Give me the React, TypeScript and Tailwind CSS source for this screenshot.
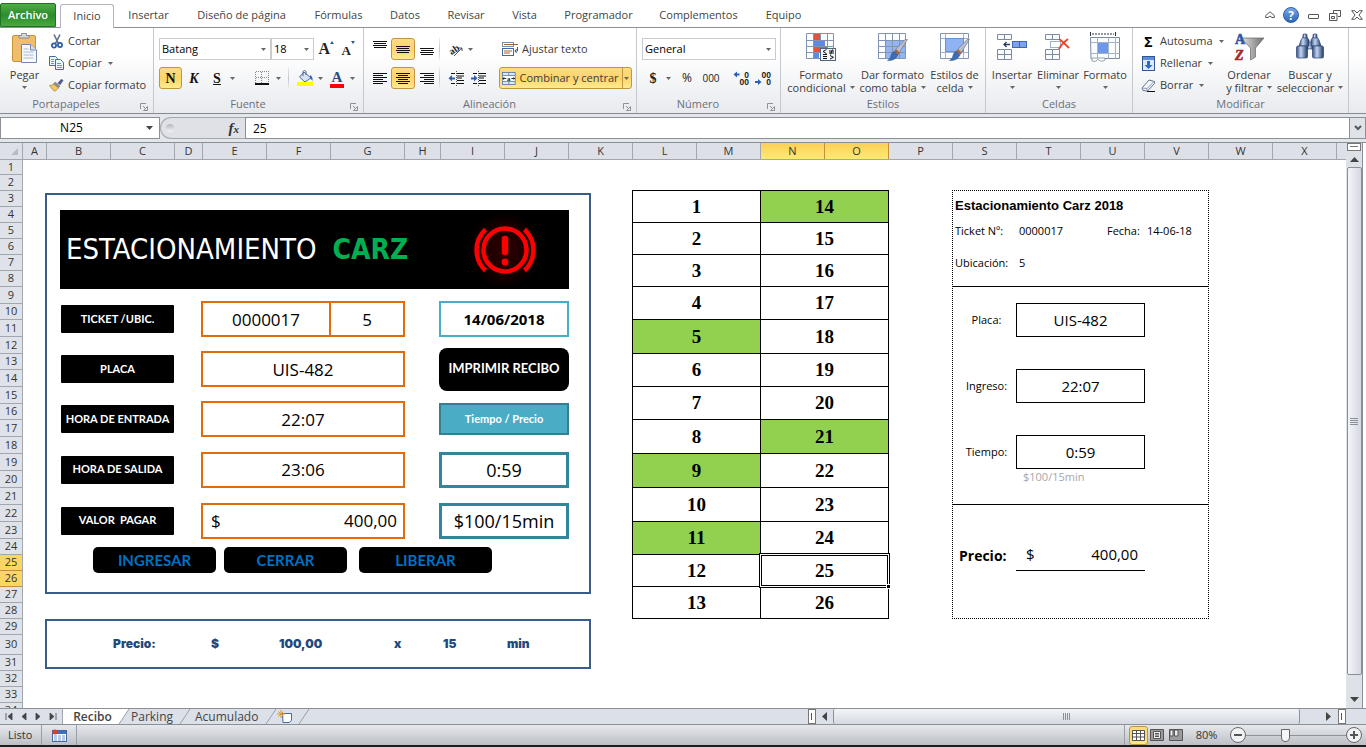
import React from 'react';
import { clsx } from 'clsx';

const TABS = [
  { label: 'Insertar', width: 'w-[67px]' },
  { label: 'Diseño de página', width: 'w-[119px]' },
  { label: 'Fórmulas', width: 'w-[75px]' },
  { label: 'Datos', width: 'w-[58px]' },
  { label: 'Revisar', width: 'w-[64px]' },
  { label: 'Vista', width: 'w-[53px]' },
  { label: 'Programador', width: 'w-[95px]' },
  { label: 'Complementos', width: 'w-[105px]' },
  { label: 'Equipo', width: 'w-[65px]' },
];

const COLUMNS: [string, number][] = [
  ['A', 24], ['B', 64], ['C', 64], ['D', 28], ['E', 64], ['F', 64], ['G', 74], ['H', 36],
  ['I', 64], ['J', 64], ['K', 64], ['L', 64], ['M', 64], ['N', 64], ['O', 64], ['P', 64],
  ['S', 64], ['T', 64], ['U', 64], ['V', 64], ['W', 64], ['X', 64],
];

const ROW_HEIGHTS = [
  15, 16, 16, 16, 16, 16, 16, 16, 17, 16, 17, 17, 16, 17, 17, 16, 17,
  17, 17, 17, 17, 17, 17, 16, 16, 16, 16, 16, 16, 20, 16, 16, 16, 16,
];

const SPOT_HEIGHTS = [32, 32, 32, 33, 34, 33, 33, 34, 34, 34, 33, 32, 32];
const TAKEN = [5, 9, 11, 14, 21];
const SELECTED = 25;

const HOT = 'border border-[#c2963f] rounded-[3px] bg-linear-to-b from-[#fddc83] via-[#fdd566] to-[#feea8f]';

/* ---------- small pieces ---------- */

const Caret: React.FC<{ className?: string }> = ({ className }) => (
  <svg viewBox="0 0 5 3" className={clsx('w-[5px] h-[3px] shrink-0', className)}>
    <path d="M0 0h5L2.5 3z" fill="#666" />
  </svg>
);

const Launcher = () => (
  <button aria-label="Más opciones" className="w-2 h-2">
    <svg viewBox="0 0 8 8" className="w-2 h-2" fill="none" stroke="#8d9299">
      <path d="M.5 6V.5H6M3 3l3 3M7.500 3.500v4h-4z" />
    </svg>
  </button>
);

const Divider = () => <span className="w-px h-[22px] bg-linear-to-b from-[#eceef1] via-[#c3c6cb] to-[#eceef1]" />;

const Lines: React.FC<{ rows: [number, number][]; top?: number }> = ({ rows, top = 1 }) => (
  <svg viewBox="0 0 15 15" className="w-[15px] h-[15px]" shapeRendering="crispEdges">
    {rows.map(([x, w], i) => (
      <rect key={i} x={x} y={top + i * 2} width={w} height="1" fill="#111" />
    ))}
  </svg>
);

interface GroupProps {
  name: string;
  width: string;
  launcher?: boolean;
  children: React.ReactNode;
}

const Group: React.FC<GroupProps> = ({ name, width, launcher, children }) => (
  <section className={clsx('flex flex-col h-full shrink-0 border-r border-[#c5c8cd]', width)}>
    <div className="flex h-[68px]">{children}</div>
    <div className="flex h-[17px] items-center text-[#6b6f7a]">
      <span className={clsx('flex-1 text-center', launcher && 'pr-2')}>{name}</span>
      {launcher && <span className="flex w-[13px] pt-1"><Launcher /></span>}
    </div>
  </section>
);

const BigButton: React.FC<{ lines: string[]; width: string; icon: React.ReactNode }> = ({ lines, width, icon }) => (
  <button className={clsx('flex flex-col items-center pt-1 leading-[13px] whitespace-nowrap', width)}>
    <span className="h-[36px]">{icon}</span>
    <span>{lines[0]}</span>
    <span className="flex h-[13px] items-center gap-1">
      {lines[1]}
      <Caret />
    </span>
  </button>
);

const SmallButton: React.FC<{ label: string; icon: React.ReactNode; caret?: boolean }> = ({ label, icon, caret }) => (
  <button className="flex h-[22px] items-center gap-1 whitespace-nowrap">
    <span className="flex w-[15px] shrink-0 justify-center">{icon}</span>
    {label}
    {caret && <Caret className="ml-[2px]" />}
  </button>
);

const Combo: React.FC<{ value: string; label: string; width: string }> = ({ value, label, width }) => (
  <div className={clsx('relative h-[22px] border border-[#c8cbd0] bg-white', width)}>
    <select aria-label={label} className="h-full w-full appearance-none bg-transparent pl-[2px] text-black outline-none">
      <option>{value}</option>
    </select>
    <Caret className="pointer-events-none absolute right-[4px] top-[9px]" />
  </div>
);

/* ---------- icons ---------- */

const PasteIcon = () => (
  <svg viewBox="0 0 30 32" className="w-[30px] h-8">
    <rect x="2.500" y="3.500" width="23" height="26" rx="1.500" fill="#eebe6a" stroke="#c9913a" />
    <path d="M9 6V3.500h2.500V1.500h5v2H19V6z" fill="#d5d9df" stroke="#777d88" strokeWidth=".8" />
    <path d="M11.500 12.500h9l6 5.500v12.500h-15z" fill="#f6f9fe" stroke="#7288ab" />
    <path d="M20.500 12.500V18h6" fill="#d4e0f2" stroke="#7288ab" />
    <path d="M13.500 17h5M13.500 20h10M13.500 23h10M13.500 26h10" stroke="#a9b9d2" />
  </svg>
);

const CutIcon = () => (
  <svg viewBox="0 0 14 15" className="w-3.5 h-[15px]" fill="none">
    <path d="M4 .5l4.500 9M10 .5l-4.500 9" stroke="#5c6f8d" strokeWidth="1.600" />
    <circle cx="4" cy="11.500" r="2.100" stroke="#2e5aa8" strokeWidth="1.700" />
    <circle cx="10" cy="11" r="2.100" stroke="#2e5aa8" strokeWidth="1.700" />
  </svg>
);

const CopyIcon = () => (
  <svg viewBox="0 0 15 14" className="w-[15px] h-3.5" stroke="#44699f">
    <path d="M.5.500h6l2 2v7h-8z" fill="#eef4fd" />
    <path d="M6.500 3.500h5l3 3v7h-8z" fill="#eef4fd" />
    <path d="M2 3.500h3M2 5.500h3M2 7.500h3M8 7.500h4M8 9.500h5M8 11.500h5" stroke="#6f94cc" />
  </svg>
);

const BrushIcon = () => (
  <svg viewBox="0 0 16 14" className="w-4 h-3.5">
    <path d="M9 5l4-4.500 2.500 1.500L12 7z" fill="#555b8e" />
    <path d="M6.500 4l5 4-1.500 2-5-4z" fill="#8d93a3" stroke="#555" strokeWidth=".6" />
    <path d="M5 6l5 4c-1 2-3 3.500-4.500 3.500C3 11 1.500 9 .5 7.500 2.500 7.500 4 7 5 6z" fill="#efc766" stroke="#a47b27" strokeWidth=".7" />
  </svg>
);

const TableBase: React.FC<{ fill?: string }> = ({ fill }) => (
  <>
    <rect x="1.500" y="1.500" width="27" height="25" fill="#fbfdff" />
    {fill && <rect x="8" y="8" width="20" height="18" fill={fill} />}
    <path d="M1.500 1.500h27v25h-27zM1.500 8.500h27M1.500 14.500h27M1.500 20.500h27M8.500 1.500v25M15.500 1.500v25M22.500 1.500v25" fill="none" stroke="#8294b2" />
  </>
);

const PaintBrush = () => (
  <>
    <path d="M30.500 7.500l-2.500 0L18.500 17.500l3.500 3.500z" fill="#b9bec8" stroke="#6b6f78" strokeWidth=".6" />
    <path d="M19 17l4 4-2 2-4-3.500z" fill="#a6683c" />
    <path d="M17 19.500l4 3.500c-2 4-6 6-10.500 5.500 2-1.500 3-2.500 3.500-5 .5-2 1.500-3.500 3-4z" fill="#3c6cb8" stroke="#27508f" strokeWidth=".5" />
  </>
);

const ConditionalIcon = () => (
  <svg viewBox="0 0 32 31" className="w-8 h-[31px]">
    <TableBase />
    <rect x="9" y="2" width="6" height="6" fill="#e8503a" />
    <rect x="9" y="9" width="11" height="5" fill="#5d8be0" />
    <rect x="9" y="15" width="13" height="5" fill="#e8503a" />
    <rect x="9" y="21" width="5" height="5" fill="#5d8be0" />
    <rect x="15.500" y="16.500" width="15" height="12" fill="#f3f6fb" stroke="#55647d" />
    <path d="M21.500 17.500l-3.500 2 3.500 2M18 22.500h4M24 19h5M24 21h5M27.500 17.500l-2 5M18 24.500h4M18 26.500h4M25 23.500l3.500 1.800-3.500 1.800" fill="none" stroke="#111" />
  </svg>
);

const TableFormatIcon = () => (
  <svg viewBox="0 0 32 31" className="w-8 h-[31px]">
    <TableBase fill="#93b6f3" />
    <PaintBrush />
  </svg>
);

const CellStyleIcon = () => (
  <svg viewBox="0 0 32 31" className="w-8 h-[31px]">
    <path d="M1.500 1.500h28v25h-28z" fill="#fbfdff" stroke="#8294b2" />
    <path d="M6.500 1.500v25M24.500 1.500v25M1.500 6.500h28M1.500 20.500h28" stroke="#a3b2ca" />
    <rect x="6.500" y="6.500" width="18" height="13" fill="#8fb3f5" stroke="#6a90d5" />
    <PaintBrush />
  </svg>
);

const MiniCells: React.FC<{ y: number; h: number }> = ({ y, h }) => (
  <path d={`M1.500 ${y}h14v${h}h-14zM8.500 ${y}v${h}${h > 6 ? `M1.500 ${y + 5}h14` : ''}`} fill="#f9fbfe" stroke="#7d8aa0" />
);

const InsertIcon = () => (
  <svg viewBox="0 0 32 30" className="w-8 h-[30px]">
    <MiniCells y={2.5} h={5} />
    <MiniCells y={17.5} h={10} />
    <rect x="16.500" y="9.500" width="14" height="6" fill="#7ca3ec" stroke="#3f67b2" />
    <path d="M23.500 9.500v6" stroke="#3f67b2" />
    <path d="M14 12.500H8M10.500 10L8 12.500l2.500 2.500" fill="none" stroke="#2a3f66" strokeWidth="1.300" />
  </svg>
);

const DeleteIcon = () => (
  <svg viewBox="0 0 32 30" className="w-8 h-[30px]">
    <g transform="translate(2)">
      <MiniCells y={2.5} h={5} />
      <MiniCells y={17.5} h={10} />
      <path d="M6.500 9.500h10v6h-10z" fill="none" stroke="#3f5fa5" strokeDasharray="1 1" />
      <path d="M15 7c3 2 6 5 10 9M24 7c-4 3-7 6-9 10" fill="none" stroke="#ef4423" strokeWidth="1.800" />
    </g>
  </svg>
);

const FormatIcon = () => (
  <svg viewBox="0 0 32 31" className="w-8 h-[31px]">
    <path d="M1.500 0v4M26.500 0v4" stroke="#333" />
    <path d="M3 2h22" stroke="#26344d" strokeDasharray="2 1" />
    <path d="M1.500 5.500h29v21H9c0 2-6 2-7 0z" fill="#fafcff" stroke="#7d8aa0" />
    <path d="M8.500 5.500v21M19.500 5.500v21M26.500 5.500v21M1.500 10.500h29M1.500 21.500h29" stroke="#a5b2c8" />
    <rect x="9" y="11" width="10" height="10" fill="#6d97e8" />
    <path d="M3 29c3 1 5 0 6-2 1 2 4 3 7 1v-2H3z" fill="#fff" stroke="#7d8aa0" strokeWidth=".8" />
  </svg>
);

const SortIcon = () => (
  <svg viewBox="0 0 32 32" className="w-8 h-8 overflow-visible">
    <defs>
      <linearGradient id="funnel">
        <stop offset="0" stopColor="#e4e4e4" />
        <stop offset="1" stopColor="#6d6d6d" />
      </linearGradient>
    </defs>
    <path d="M8 6h23l-8.500 10v9l-5 3V16z" fill="url(#funnel)" stroke="#757575" strokeWidth=".8" />
    <text x="2" y="12" fontFamily="Liberation Serif, serif" fontWeight="bold" fontSize="14" fill="#2f58a6" stroke="#2f58a6" strokeWidth=".6">A</text>
    <text x="2" y="28" fontFamily="Liberation Serif, serif" fontWeight="bold" fontStyle="italic" fontSize="14" fill="#a3272a" stroke="#a3272a" strokeWidth=".6">Z</text>
  </svg>
);

const BinocularsIcon = () => (
  <svg viewBox="0 0 30 28" className="w-[30px] h-7">
    <defs>
      <linearGradient id="lens">
        <stop offset="0" stopColor="#31507f" />
        <stop offset=".4" stopColor="#c4d6f2" />
        <stop offset="1" stopColor="#1f3966" />
      </linearGradient>
    </defs>
    <g fill="url(#lens)" stroke="#2b4472" strokeWidth=".7">
      <rect x="12" y="10" width="6" height="7" />
      <path d="M4 14l2-6 2-3h4l2 3v6z" />
      <path d="M16 14V8l2-3h4l2 3 2 6z" />
      <rect x="8" y="2" width="4" height="4" rx="1" />
      <rect x="18" y="2" width="4" height="4" rx="1" />
      <rect x="1.500" y="14" width="11" height="12" rx="1.500" />
      <rect x="17.500" y="14" width="11" height="12" rx="1.500" />
    </g>
  </svg>
);

const FillIcon = () => (
  <svg viewBox="0 0 13 15" className="w-[13px] h-[15px]">
    <rect x=".5" y=".5" width="12" height="14" fill="#dfeafb" stroke="#33558f" />
    <rect x="1" y="1" width="11" height="3" fill="#5d8be0" />
    <path d="M5 5h3v4h2.500l-4 4-4-4H5z" fill="#2f66cf" />
  </svg>
);

const EraserIcon = () => (
  <svg viewBox="0 0 15 13" className="w-[15px] h-[13px]">
    <path d="M1 9l7-8 5.500 1.500v2L6.500 12 2 11.500z" fill="#f3f6fb" stroke="#66728a" />
    <path d="M1 9l5 .5 7-7M6 9.500V12" fill="none" stroke="#8b98b0" />
    <path d="M6 12.500h8" stroke="#111" />
  </svg>
);

const BucketIcon = () => (
  <svg viewBox="0 0 17 16" className="w-[17px] h-4">
    <path d="M7 2l7 6-6 4-5.500-5z" fill="#d6e3f6" stroke="#51688f" />
    <path d="M6 6V2c0-2 3-2 3 0v3" fill="none" stroke="#51688f" />
    <path d="M13 5c2 1 3 3 2.500 6-1-1-1.500-2-2.500-3z" fill="#2c66c4" />
    <rect x="0" y="12" width="16" height="4" fill="#ff0" />
  </svg>
);

const WrapIcon = () => (
  <svg viewBox="0 0 17 15" className="w-[17px] h-[15px]" fill="none">
    <rect x=".5" y=".5" width="11" height="4" fill="#fff" stroke="#7d8aa0" />
    <path d="M2 2.500h14" stroke="#a5622d" />
    <rect x=".5" y="6.500" width="11" height="7" fill="#fff" stroke="#44699f" />
    <path d="M2 9h8M2 11h6" stroke="#a5622d" />
    <path d="M15.500 5v4h-2M14.500 7L13 9l1.500 2" stroke="#2f5a9f" />
  </svg>
);

const MergeIcon = () => (
  <svg viewBox="0 0 17 15" className="w-[17px] h-[15px]">
    <rect x=".5" y=".5" width="15" height="14" fill="#dce8fa" stroke="#5a79ad" />
    <path d="M.5 4h15M.5 11h15M8 .5V4M8 11v3.500" stroke="#5a79ad" />
    <rect x="1" y="4.500" width="14" height="6" fill="#fff" />
    <path d="M1 7.500h4M2.500 6L1 7.500 2.500 9M15 7.500h-4M13.500 6L15 7.500 13.500 9" fill="none" stroke="#111" />
    <text x="6" y="10" fontFamily="Liberation Serif, serif" fontSize="8" fontWeight="bold" fill="#111">a</text>
  </svg>
);

const IndentIcon: React.FC<{ right?: boolean }> = ({ right }) => (
  <svg viewBox="0 0 17 15" className="w-[17px] h-[15px]">
    <path d="M3 2.500h4M9 2.500h7M9 5h7M9 7h5M9 9.500h7M3 12.500h4M9 12.500h7" stroke="#111" strokeWidth="1.200" />
    <path d={right ? 'M1 6.500h3V4l3.500 3.200L4 10.500v-2H1z' : 'M7 6.500H4V4L.5 7.200 4 10.500v-2h3z'} fill="#2f5fb5" />
    <path d="M8.500 0v15" stroke="#555" strokeDasharray="1 1" />
  </svg>
);

const DecimalIcon: React.FC<{ top: string; bottom: string; right?: boolean }> = ({ top, bottom, right }) => (
  <svg viewBox="0 0 17 15" className="w-[17px] h-[15px]">
    <text x="16" y="6.500" textAnchor="end" fontFamily="Liberation Sans, sans-serif" fontSize="8.500" fontWeight="bold" fill="#222">{top}</text>
    <text x="16" y="14" textAnchor="end" fontFamily="Liberation Sans, sans-serif" fontSize="8.500" fontWeight="bold" fill="#222">{bottom}</text>
    <path d={right ? 'M0 10h3V8l3.500 3L3 14v-2H0z' : 'M6.500 2.500H4V.5L.5 3.500l3.500 3v-2h2.500z'} fill="#2f5fb5" />
  </svg>
);

const BrakeIcon = () => (
  <svg viewBox="0 0 80 78" className="w-20 h-[78px]" fill="none" stroke="#f00">
    <defs>
      <radialGradient id="glow">
        <stop offset="0" stopColor="#2c0000" />
        <stop offset=".55" stopColor="#1e0000" />
        <stop offset="1" stopColor="#000" />
      </radialGradient>
    </defs>
    <circle cx="40" cy="39" r="38" fill="url(#glow)" stroke="none" />
    <circle cx="40" cy="39" r="21.500" strokeWidth="4.500" />
    <path d="M40 28v13" strokeWidth="6.500" strokeLinecap="round" />
    <circle cx="40" cy="51" r="3.400" fill="#f00" stroke="none" />
    <path d="M20.500 18.500a28 28 0 0 0 0 41M59.500 18.500a28 28 0 0 1 0 41" strokeWidth="4.500" />
  </svg>
);

/* ---------- ribbon ---------- */

const TabBar = () => (
  <nav className="flex h-7 items-end border-b border-[#8b9097] text-[#444]">
    <button className="h-6 w-14 rounded-t-[2px] border border-[#1e7320] bg-linear-to-b from-[#4fae45] via-[#2c8b2c] to-[#48a93c] font-semibold text-white">
      Archivo
    </button>
    <button className="-mb-px ml-1 h-6 w-[54px] rounded-t-[3px] border border-b-0 border-[#b0b4ba] bg-white">Inicio</button>
    <div className="ml-px flex">
      {TABS.map(tab => (
        <button key={tab.label} className={clsx('h-6 pt-px text-center whitespace-nowrap', tab.width)}>{tab.label}</button>
      ))}
    </div>
    <div className="ml-auto flex h-6 items-center gap-2 pr-[3px]">
      <button aria-label="Minimizar la cinta">
        <svg viewBox="0 0 10 8" className="w-[10px] h-2" fill="none" stroke="#555">
          <path d="M.7 4.500L5 .8l4.300 3.700v2H7L5 5 3 6.500H.7z" />
        </svg>
      </button>
      <button aria-label="Ayuda" className="h-4 w-4 rounded-full border border-[#2a5ea8] bg-linear-to-b from-[#7aa7e4] to-[#2d66b9] text-[12px] leading-[13px] font-bold text-white">?</button>
      <button aria-label="Minimizar" className="mx-px mt-[3px] h-[5px] w-[11px] rounded-[1px] border border-[#555]" />
      <button aria-label="Restaurar" className="ml-px">
        <svg viewBox="0 0 12 11" className="w-3 h-[11px]" fill="none" stroke="#555">
          <path d="M4.500 3V.5h7v6H9M.5 3.500H8v7H.5zM2.500 6.500h3v2h-3z" />
        </svg>
      </button>
      <button aria-label="Cerrar" className="ml-[2px]">
        <svg viewBox="0 0 12 10" className="w-3 h-[10px]" fill="none" stroke="#555">
          <path d="M.7.700h3L6 3l2.300-2.300h3L8 5l3.300 4.300h-3L6 7 3.700 9.300h-3L4 5z" />
        </svg>
      </button>
    </div>
  </nav>
);

const Ribbon = () => (
  <div className="flex h-[86px] border-b border-[#868b91] bg-linear-to-b from-white from-30% to-[#e8eaee] text-[#3b3b3b]">
    <Group name="Portapapeles" width="w-[154px]" launcher>
      <BigButton lines={['Pegar', '']} width="w-[49px]" icon={<PasteIcon />} />
      <div className="flex flex-col pt-[2px]">
        <SmallButton label="Cortar" icon={<CutIcon />} />
        <SmallButton label="Copiar" icon={<CopyIcon />} caret />
        <SmallButton label="Copiar formato" icon={<BrushIcon />} />
      </div>
    </Group>

    <Group name="Fuente" width="w-[210px]" launcher>
      <div className="flex flex-col gap-[7px] pt-[10px] pl-[5px]">
        <div className="flex h-[22px] items-center">
          <Combo value="Batang" label="Fuente" width="w-[112px]" />
          <Combo value="18" label="Tamaño" width="w-[43px]" />
          <button aria-label="Aumentar tamaño" className="flex w-[20px] justify-end font-['Liberation_Serif',serif] text-[16px] font-bold text-[#222]">
            A<svg viewBox="0 0 4 3" className="mt-1 w-1 h-[3px]"><path d="M0 3L2 0l2 3z" fill="#2f5a9f" /></svg>
          </button>
          <button aria-label="Disminuir tamaño" className="flex w-[21px] justify-end pt-1 font-['Liberation_Serif',serif] text-[13px] font-bold text-[#222]">
            A<svg viewBox="0 0 4 3" className="w-1 h-[3px]"><path d="M0 0h4L2 3z" fill="#2f5a9f" /></svg>
          </button>
        </div>
        <div className="flex h-[22px] items-center font-['Liberation_Serif',serif] text-[14px] font-bold text-[#111]">
          <button aria-label="Negrita" className={clsx('h-[22px] w-[23px]', HOT)}>N</button>
          <button aria-label="Cursiva" className="w-[24px] italic">K</button>
          <button aria-label="Subrayado" className="w-[22px] underline">S</button>
          <Caret className="ml-[2px]" />
          <span className="mx-[10px]"><Divider /></span>
          <button aria-label="Bordes">
            <svg viewBox="0 0 14 14" className="w-3.5 h-3.5" shapeRendering="crispEdges">
              <path d="M.5.500h13v12M.5.500v12M.5 6.500h13M6.500.500v12" fill="none" stroke="#888" strokeDasharray="1 1" />
              <path d="M0 13h14" stroke="#111" strokeWidth="2" />
            </svg>
          </button>
          <Caret className="mx-[7px]" />
          <Divider />
          <button aria-label="Color de relleno" className="ml-2"><BucketIcon /></button>
          <Caret className="ml-1" />
          <button aria-label="Color de fuente" className="mt-[2px] ml-[7px] h-[17px] w-[14px] border-b-4 border-[#f00] text-[15px] leading-[13px] text-[#2b4a86]">A</button>
          <Caret className="ml-[6px]" />
        </div>
      </div>
    </Group>

    <Group name="Alineación" width="w-[273px]" launcher>
      <div className="flex flex-col gap-[7px] pt-[10px] pl-[5px]">
        <div className="flex h-[22px] items-center">
          <button aria-label="Alinear arriba" className="flex w-[22px] justify-center pb-1"><Lines rows={[[0, 14], [1, 12], [0, 14], [1, 12]]} /></button>
          <button aria-label="Alinear en medio" className={clsx('flex h-[22px] w-[24px] items-center justify-center', HOT)}><Lines rows={[[0, 14], [1, 12], [0, 14], [1, 12]]} top={4} /></button>
          <button aria-label="Alinear abajo" className="flex w-[24px] justify-center"><Lines rows={[[0, 14], [1, 12], [0, 14], [1, 12]]} top={6} /></button>
          <Divider />
          <button aria-label="Orientación" className="ml-2 flex items-center gap-[3px]">
            <svg viewBox="0 0 17 15" className="w-[17px] h-[15px] overflow-visible">
              <text x="1" y="11" fontFamily="Liberation Serif, serif" fontSize="10" fontWeight="bold" fill="#222" transform="rotate(-35 6 8)">ab</text>
              <path d="M6 14L14 6M11 6h3v3" fill="none" stroke="#555" />
            </svg>
            <Caret />
          </button>
          <span className="ml-[21px]"><Divider /></span>
          <button className="ml-[8px] flex items-center gap-[3px] whitespace-nowrap"><WrapIcon />Ajustar texto</button>
        </div>
        <div className="flex h-[22px] items-center">
          <button aria-label="Alinear a la izquierda" className="flex w-[22px] justify-center"><Lines rows={[[0, 14], [0, 10], [0, 14], [0, 10], [0, 14], [0, 10]]} top={2} /></button>
          <button aria-label="Centrar" className={clsx('flex h-[22px] w-[24px] items-center justify-center', HOT)}><Lines rows={[[0, 14], [2, 10], [0, 14], [2, 10], [0, 14], [2, 10]]} top={2} /></button>
          <button aria-label="Alinear a la derecha" className="flex w-[24px] justify-center"><Lines rows={[[0, 14], [4, 10], [0, 14], [4, 10], [0, 14], [4, 10]]} top={2} /></button>
          <Divider />
          <button aria-label="Disminuir sangría" className="ml-2"><IndentIcon /></button>
          <button aria-label="Aumentar sangría" className="ml-[5px]"><IndentIcon right /></button>
          <span className="ml-[7px]"><Divider /></span>
          <button className={clsx('ml-[5px] flex h-[22px] w-[133px] items-center gap-[3px] pl-[2px] whitespace-nowrap', HOT)}>
            <MergeIcon />
            <span className="flex-1 text-left">Combinar y centrar</span>
            <span className="flex h-full w-[11px] items-center justify-center border-l border-[#c2963f]"><Caret /></span>
          </button>
        </div>
      </div>
    </Group>

    <Group name="Número" width="w-[144px]" launcher>
      <div className="flex flex-col gap-[7px] pt-[10px] pl-[5px]">
        <Combo value="General" label="Formato de número" width="w-[134px]" />
        <div className="flex h-[22px] items-center text-[#222]">
          <button aria-label="Formato de contabilidad" className="w-[22px] font-['Liberation_Serif',serif] text-[14px] font-bold">$</button>
          <Caret className="ml-[2px]" />
          <button aria-label="Porcentaje" className="ml-2 w-[16px] text-[12px]">%</button>
          <button aria-label="Millares" className="ml-[6px] w-[20px] text-[10px]">000</button>
          <span className="mx-[6px]"><Divider /></span>
          <button aria-label="Aumentar decimales"><DecimalIcon top="0" bottom="00" /></button>
          <button aria-label="Disminuir decimales" className="ml-[5px]"><DecimalIcon top="00" bottom="0" right /></button>
        </div>
      </div>
    </Group>

    <Group name="Estilos" width="w-[205px]">
      <BigButton lines={['Formato', 'condicional']} width="w-[80px]" icon={<ConditionalIcon />} />
      <BigButton lines={['Dar formato', 'como tabla']} width="w-[63px]" icon={<TableFormatIcon />} />
      <BigButton lines={['Estilos de', 'celda']} width="w-[61px]" icon={<CellStyleIcon />} />
    </Group>

    <Group name="Celdas" width="w-[147px]">
      <BigButton lines={['Insertar', '']} width="w-[52px]" icon={<InsertIcon />} />
      <BigButton lines={['Eliminar', '']} width="w-[40px]" icon={<DeleteIcon />} />
      <BigButton lines={['Formato', '']} width="w-[54px]" icon={<FormatIcon />} />
    </Group>

    <Group name="Modificar" width="w-[216px]">
      <div className="flex w-[86px] flex-col pt-[2px] pl-2">
        <SmallButton label="Autosuma" icon={<span className="text-[14px] font-bold text-black">Σ</span>} caret />
        <SmallButton label="Rellenar" icon={<FillIcon />} caret />
        <SmallButton label="Borrar" icon={<EraserIcon />} caret />
      </div>
      <BigButton lines={['Ordenar', 'y filtrar']} width="w-[60px]" icon={<SortIcon />} />
      <BigButton lines={['Buscar y', 'seleccionar']} width="w-[62px]" icon={<BinocularsIcon />} />
    </Group>
  </div>
);

const FormulaBar = () => (
  <div className="flex h-[29px] items-center border-b border-[#8b9097] bg-[#e3e6eb] py-[3px] text-[12px] text-black">
    <div className="flex h-[22px] w-[160px] items-center border border-[#8b9097] bg-white pr-[6px]">
      <input aria-label="Cuadro de nombres" defaultValue="N25" className="w-[141px] text-center outline-none" />
      <svg viewBox="0 0 7 4" className="ml-auto w-[7px] h-1"><path d="M0 0h7L3.500 4z" fill="#444" /></svg>
    </div>
    <div className="flex h-[22px] w-[85px] items-center rounded-l-full border border-r-0 border-[#a4a8af] bg-[#dfe1e6] pl-[5px]">
      <span className="h-2 w-2 rounded-full bg-linear-to-b from-[#b3b6bc] to-[#f4f5f7]" />
      <button aria-label="Insertar función" className="mr-[6px] ml-auto font-['Liberation_Serif',serif] text-[15px] leading-none font-bold italic text-[#333]">
        f<span className="text-[11px]">x</span>
      </button>
    </div>
    <input aria-label="Barra de fórmulas" defaultValue="25" className="h-[22px] flex-1 border border-[#8b9097] bg-white pl-[7px] outline-none" />
    <button aria-label="Expandir" className="flex h-[22px] w-4 items-center justify-center border border-l-0 border-[#8b9097] bg-[#dfe2e7]">
      <svg viewBox="0 0 8 6" className="w-2 h-[6px]"><path d="M1 1l3 3 3-3" fill="none" stroke="#555" strokeWidth="2" /></svg>
    </button>
  </div>
);

/* ---------- worksheet ---------- */

const ColumnHeaders = () => (
  <div className="flex h-[17px] border-b border-[#a2a6ae] bg-[#dde1e7] leading-4 text-[#333]">
    <div className="flex w-[23px] shrink-0 items-end justify-end border-r border-[#a2a6ae] p-1">
      <svg viewBox="0 0 7 7" className="w-[7px] h-[7px]"><path d="M7 0v7H0z" fill="#b7bbc3" /></svg>
    </div>
    {COLUMNS.map(([name, width]) => (
      <div
        key={name}
        className={clsx(
          'shrink-0 border-r text-center',
          name === 'N' || name === 'O'
            ? 'border-[#c2903a] bg-linear-to-b from-[#fccf58] to-[#fdea70]'
            : 'border-[#a2a6ae]',
        )}
        style={{ width }}
      >
        {name}
      </div>
    ))}
  </div>
);

const RowHeaders = () => (
  <div className="w-[23px] shrink-0 border-r border-[#a2a6ae] bg-[#dfe3e9] text-[#333]">
    {ROW_HEIGHTS.map((height, i) => (
      <div
        key={i}
        className={clsx(
          'flex items-center justify-center border-b',
          i === 24 || i === 25 ? 'border-[#c2903a] bg-[#fdd662]' : 'border-[#a2a6ae]',
        )}
        style={{ height }}
      >
        {i + 1}
      </div>
    ))}
  </div>
);

const Tag: React.FC<{ htmlFor?: string; children: React.ReactNode }> = ({ htmlFor, children }) => (
  <label htmlFor={htmlFor} className="ml-px flex h-7 w-[113px] items-center justify-center rounded-[1px] bg-black font-['Lato',sans-serif] text-[11px] font-bold whitespace-pre text-white">
    {children}
  </label>
);

const FIELD = 'h-9 min-w-0 border-2 border-[#e26b0a] bg-white text-center text-[17px] outline-none';
const SIDE = 'h-9 w-full min-w-0 bg-white text-center outline-none';
const ACTION = "h-[26px] rounded-[5px] bg-black font-['Lato',sans-serif] text-[15px] font-bold text-[#0070c0]";

const ParkingForm = () => (
  <form className="h-[401px] border-2 border-[#385d8a] pt-[15px] pr-[20px] pl-[13px] text-black" onSubmit={e => e.preventDefault()}>
    <header className="flex h-[79px] items-center bg-black pl-[6px] font-['DejaVu_Sans_Condensed','DejaVu_Sans',sans-serif] text-[28px] text-white">
      <h1 className="text-[29px]">ESTACIONAMIENTO</h1>
      <strong className="ml-4 text-[#00b050]">CARZ</strong>
      <span className="mr-6 ml-auto"><BrakeIcon /></span>
    </header>

    <div className="mt-[5px] grid grid-cols-[141px_238px_130px] grid-rows-[50px_50px_50px_51px_51px] items-center">
      <Tag htmlFor="ticket">TICKET /UBIC.</Tag>
      <div className="flex w-[204px]">
        <input id="ticket" defaultValue="0000017" className={clsx(FIELD, 'flex-1')} />
        <input aria-label="Ubicación" defaultValue="5" className={clsx(FIELD, '-ml-[2px] w-[76px]')} />
      </div>
      <input aria-label="Fecha" defaultValue="14/06/2018" className={clsx(SIDE, 'border-2 border-[#4bacc6] text-[15px] font-bold')} />

      <Tag htmlFor="placa">PLACA</Tag>
      <input id="placa" defaultValue="UIS-482" className={clsx(FIELD, 'w-[204px]')} />
      <button className="h-[43px] rounded-lg bg-black font-['Lato',sans-serif] text-[13px] font-bold text-white">IMPRIMIR RECIBO</button>

      <Tag htmlFor="entrada">HORA DE ENTRADA</Tag>
      <input id="entrada" defaultValue="22:07" className={clsx(FIELD, 'w-[204px]')} />
      <button className="h-8 border-2 border-[#357d91] bg-[#4bacc6] font-['Lato',sans-serif] text-[11px] font-bold text-white">Tiempo / Precio</button>

      <Tag htmlFor="salida">HORA DE SALIDA</Tag>
      <input id="salida" defaultValue="23:06" className={clsx(FIELD, 'w-[204px]')} />
      <input aria-label="Tiempo" defaultValue="0:59" className={clsx(SIDE, 'border-3 border-[#31869b] text-[18px]')} />

      <Tag>VALOR  PAGAR</Tag>
      <output className="flex h-9 w-[204px] items-center justify-between border-2 border-[#e26b0a] px-[6px] text-[17px]">
        <span className="pl-[2px]">$</span>
        <span>400,00</span>
      </output>
      <input aria-label="Tarifa" defaultValue="$100/15min" className={clsx(SIDE, 'border-3 border-[#31869b] text-[18px]')} />
    </div>

    <div className="mt-px flex pl-[33px]">
      <button className={clsx(ACTION, 'w-[123px]')}>INGRESAR</button>
      <button className={clsx(ACTION, 'ml-2 w-[123px]')}>CERRAR</button>
      <button className={clsx(ACTION, 'ml-3 w-[133px]')}>LIBERAR</button>
    </div>
  </form>
);

const PricePanel = () => (
  <div className="mt-[25px] flex h-[50px] items-center border-2 border-[#385d8a] pl-[66px] font-['Inter',sans-serif] text-[12px] font-black text-[#1f497d]">
    <span className="w-[98px]">Precio:</span>
    <span className="w-[68px]">$</span>
    <span className="w-[115px]">100,00</span>
    <span className="w-[49px]">x</span>
    <span className="w-[64px]">15</span>
    <span>min</span>
  </div>
);

const SpotCell: React.FC<{ spot: number }> = ({ spot }) => (
  <td className={clsx('border-t border-l border-black p-0', spot === SELECTED && 'relative z-10', TAKEN.includes(spot) && 'bg-[#92d050]')}>
    {spot}
    {spot === SELECTED && (
      <span className="absolute -inset-[2px] border border-black shadow-[inset_0_0_0_1px_#fff,inset_0_0_0_2px_#000]">
        <span className="absolute -right-[2px] -bottom-[2px] h-[5px] w-[5px] border border-white bg-black" />
      </span>
    )}
  </td>
);

const ParkingTable = () => (
  <table className="mt-[30px] w-[257px] shrink-0 table-fixed border-separate border-spacing-0 border-r border-b border-black text-center font-['Liberation_Serif',serif] text-[19px] leading-5 font-bold text-black">
    <tbody>
      {SPOT_HEIGHTS.map((height, i) => (
        <tr key={i} style={{ height }}>
          <SpotCell spot={i + 1} />
          <SpotCell spot={i + 14} />
        </tr>
      ))}
    </tbody>
  </table>
);

const ReceiptRow: React.FC<{ label: string; value: string }> = ({ label, value }) => (
  <div className="flex h-[34px] items-center">
    <dt className="w-[63px] pl-1 text-center">{label}</dt>
    <dd className="flex h-[34px] w-[129px] items-center justify-center border border-black text-[15px]">{value}</dd>
  </div>
);

const Receipt = () => (
  <article className="mt-[30px] flex h-[429px] w-[257px] shrink-0 flex-col border border-dotted border-black text-[11px] text-black">
    <div className="h-[96px] border-b border-black pl-[2px] leading-4">
      <h2 className="font-['Liberation_Sans',sans-serif] text-[13px] leading-[30px] font-bold">Estacionamiento Carz 2018</h2>
      <p className="mt-[2px] flex">
        <span className="w-[64px]">Ticket Nº:</span>
        <span className="w-[88px]">0000017</span>
        <span className="w-[40px]">Fecha:</span>
        <span>14-06-18</span>
      </p>
      <p className="mt-4 flex">
        <span className="w-[64px]">Ubicación:</span>
        <span>5</span>
      </p>
    </div>
    <dl className="flex h-[218px] flex-col gap-8 border-b border-black pt-4">
      <ReceiptRow label="Placa:" value="UIS-482" />
      <ReceiptRow label="Ingreso:" value="22:07" />
      <div>
        <ReceiptRow label="Tiempo:" value="0:59" />
        <p className="pl-[70px] text-[#a6a6a6]">$100/15min</p>
      </div>
    </dl>
    <div className="mt-[34px] flex h-8 items-center text-[15px]">
      <strong className="w-[63px] pl-[6px] text-[14px]">Precio:</strong>
      <span className="flex h-full w-[129px] items-center justify-between border-b border-black pr-[7px] pl-[10px]">
        <span>$</span>
        <span>400,00</span>
      </span>
    </div>
  </article>
);

const VerticalScroll = () => (
  <div className="flex w-[17px] shrink-0 flex-col items-center border-r border-[#8b9097] bg-[#dde1e8]">
    <span className="h-2 w-[14px] shrink-0 border border-[#777] bg-white p-[2px]"><span className="block h-px bg-[#777]" /></span>
    <button aria-label="Subir" className="flex h-4 w-full shrink-0 items-center justify-center">
      <svg viewBox="0 0 9 5" className="w-[9px] h-[5px]"><path d="M0 5l4.500-5L9 5z" fill="#444" /></svg>
    </button>
    <div className="flex w-[15px] flex-1 flex-col items-center justify-center gap-px rounded-[2px] border border-[#8b9097] bg-linear-to-r from-[#f3f5f9] to-[#d5d9e0]">
      {[0, 1, 2, 3].map(i => <span key={i} className="h-px w-2 bg-[#8b9097]" />)}
    </div>
    <button aria-label="Bajar" className="flex h-[33px] w-full shrink-0 items-center justify-center pt-4">
      <svg viewBox="0 0 9 5" className="w-[9px] h-[5px]"><path d="M0 0h9L4.500 5z" fill="#444" /></svg>
    </button>
  </div>
);

/* ---------- bottom bars ---------- */

const NAV_PATHS = ['M2 1v7M8 1v7L4 4.500z', 'M7 1v7L3 4.500z', 'M3 1v7l4-3.500z', 'M2 1v7l4-3.500zM8 1v7'];

const Slash: React.FC<{ active?: boolean }> = ({ active }) => (
  <svg viewBox="0 0 12 15" className="w-3 h-[15px] shrink-0" fill="none" stroke="#9a9fa8">
    {active && <path d="M0 0h11L1 15H0z" fill="#fff" stroke="none" />}
    <path d="M1 15L11 0" />
  </svg>
);

const SheetTabs = () => (
  <div className="flex h-[17px] shrink-0 border-y border-[#8b9097] bg-[#dce0e8] text-[12px] leading-[15px] text-[#444]">
    <div className="flex w-[63px] items-center justify-around border-r border-[#a2a6ae] px-[2px]">
      {NAV_PATHS.map(d => (
        <button key={d} aria-label="Desplazar hojas">
          <svg viewBox="0 0 10 9" className="w-[10px] h-[9px]"><path d={d} fill="#444" stroke="#444" strokeWidth=".8" /></svg>
        </button>
      ))}
    </div>
    <button className="w-[55px] bg-white pl-1 text-center font-semibold">Recibo</button>
    <Slash active />
    <button className="ml-px w-[41px] whitespace-nowrap">Parking</button>
    <span className="ml-[7px]"><Slash /></span>
    <button className="ml-[4px] w-[61px] whitespace-nowrap">Acumulado</button>
    <span className="ml-[9px]"><Slash /></span>
    <button aria-label="Insertar hoja" className="w-[21px]">
      <svg viewBox="0 0 15 14" className="w-[15px] h-3.5">
        <path d="M5.500 3.500h9v7l-2.500 2H6z" fill="#fff" stroke="#44699f" />
        <path d="M4 0v8M0 4h8M1.500 1.500l5 5M6.500 1.500l-5 5" stroke="#e19b23" />
      </svg>
    </button>
    <Slash />
    <div className="ml-auto flex w-[538px] items-center">
      <span className="h-[15px] w-2 border border-[#777] bg-white px-[2px] py-[3px]"><span className="block h-full w-px bg-[#555]" /></span>
      <button aria-label="Izquierda" className="flex w-[17px] justify-center">
        <svg viewBox="0 0 5 9" className="w-[5px] h-[9px]"><path d="M5 0v9L0 4.500z" fill="#444" /></svg>
      </button>
      <div className="flex h-[15px] w-[467px] items-center justify-center gap-px rounded-[2px] border-x border-[#8b9097] bg-linear-to-b from-[#f3f5f9] to-[#d5d9e0]">
        {[0, 1, 2, 3].map(i => <span key={i} className="h-[7px] w-px bg-[#8b9097]" />)}
      </div>
      <button aria-label="Derecha" className="ml-[26px] flex w-[10px] justify-start">
        <svg viewBox="0 0 5 9" className="w-[5px] h-[9px]"><path d="M0 0v9l5-4.500z" fill="#444" /></svg>
      </button>
      <span className="ml-[2px] h-[15px] w-2 border border-[#777] bg-white px-[2px] py-[3px]"><span className="block h-full w-px bg-[#555]" /></span>
    </div>
    <span className="w-[20px]" />
  </div>
);

const StatusBar = () => (
  <footer className="flex h-[22px] shrink-0 items-center border-b-2 border-[#1d1d20] bg-linear-to-b from-[#e6e8ec] to-[#bcc0c6] text-[#333]">
    <span className="w-[42px] border-r border-[#9a9fa6] pl-2 leading-5">Listo</span>
    <button aria-label="Grabar macro" className="flex h-5 w-[35px] items-center justify-center border-r border-[#9a9fa6]">
      <svg viewBox="0 0 15 13" className="w-[15px] h-[13px]">
        <rect x=".5" y="1.500" width="14" height="11" fill="#fff" stroke="#44699f" />
        <path d="M1 3.500h13" stroke="#3b6fc4" strokeWidth="3" />
        <path d="M2 7h3M6 7h3M10 7h3M2 9h3M6 9h3M10 9h3M2 11h3M6 11h3M10 11h3" stroke="#6f94cc" />
        <circle cx="3" cy="3" r="2.500" fill="#d8402a" />
      </svg>
    </button>
    <div className="ml-auto flex h-5 items-center border-l border-[#9a9fa6] pl-1">
      <button aria-label="Normal" className={clsx('flex h-[19px] w-[19px] items-center justify-center', HOT)}>
        <svg viewBox="0 0 13 11" className="w-[13px] h-[11px]"><path d="M.5.500h12v10H.5zM.5 3.500h12M.5 7h12M4.500.500v10M8.500.500v10" fill="#fff" stroke="#555" /></svg>
      </button>
      <button aria-label="Diseño de página" className="ml-[2px]">
        <svg viewBox="0 0 14 12" className="w-3.5 h-3"><path d="M.5.500h13v11H.5z" fill="#9a9a9a" stroke="#555" /><path d="M3.500 2.500h7v7h-7zM5 4.500h4M5 6h4M5 7.500h4" fill="#eee" stroke="#555" /></svg>
      </button>
      <button aria-label="Salto de página" className="ml-[5px]">
        <svg viewBox="0 0 14 12" className="w-3.5 h-3"><path d="M.5.500h13v11H.5z" fill="#9a9a9a" stroke="#555" /><path d="M1 1h3v6H1zM5.500 1H9v6H5.500z" fill="#eee" stroke="#555" /></svg>
      </button>
      <button className="w-[47px] text-center">80%</button>
      <button aria-label="Alejar" className="h-4 w-4 rounded-full border border-[#666] bg-[#f1f2f4] p-[3px]"><span className="block h-[2px] bg-[#555]" /></button>
      <input
        type="range"
        aria-label="Zoom"
        min="0"
        max="100"
        defaultValue="39"
        className="h-4 w-[100px] appearance-none bg-transparent bg-[linear-gradient(#8d9198,#8d9198)] bg-[size:100%_1px] bg-center bg-no-repeat [&::-webkit-slider-thumb]:h-[13px] [&::-webkit-slider-thumb]:w-[9px] [&::-webkit-slider-thumb]:appearance-none [&::-webkit-slider-thumb]:rounded-b-[4px] [&::-webkit-slider-thumb]:border [&::-webkit-slider-thumb]:border-[#666] [&::-webkit-slider-thumb]:bg-[#f4f5f7]"
      />
      <button aria-label="Acercar" className="mr-[4px] flex h-4 w-4 items-center justify-center rounded-full border border-[#666] bg-[#f1f2f4]">
        <svg viewBox="0 0 8 8" className="w-2 h-2"><path d="M0 4h8M4 0v8" stroke="#555" strokeWidth="2" /></svg>
      </button>
    </div>
  </footer>
);

export default function App() {
  return (
    <div className="flex h-screen flex-col overflow-hidden bg-white font-['Open_Sans','Noto_Sans',sans-serif] text-[11px]">
      <TabBar />
      <Ribbon />
      <FormulaBar />
      <main className="flex min-h-0 flex-1 pr-[3px]">
        <div className="flex min-w-0 flex-1 flex-col overflow-hidden">
          <ColumnHeaders />
          <div className="flex min-h-0 flex-1 overflow-hidden">
            <RowHeaders />
            <div className="flex flex-1 items-start overflow-hidden pl-[22px]">
              <div className="mt-[33px] w-[546px] shrink-0">
                <ParkingForm />
                <PricePanel />
              </div>
              <span className="w-[41px] shrink-0" />
              <ParkingTable />
              <span className="w-[63px] shrink-0" />
              <Receipt />
            </div>
          </div>
        </div>
        <VerticalScroll />
      </main>
      <SheetTabs />
      <StatusBar />
    </div>
  );
}
